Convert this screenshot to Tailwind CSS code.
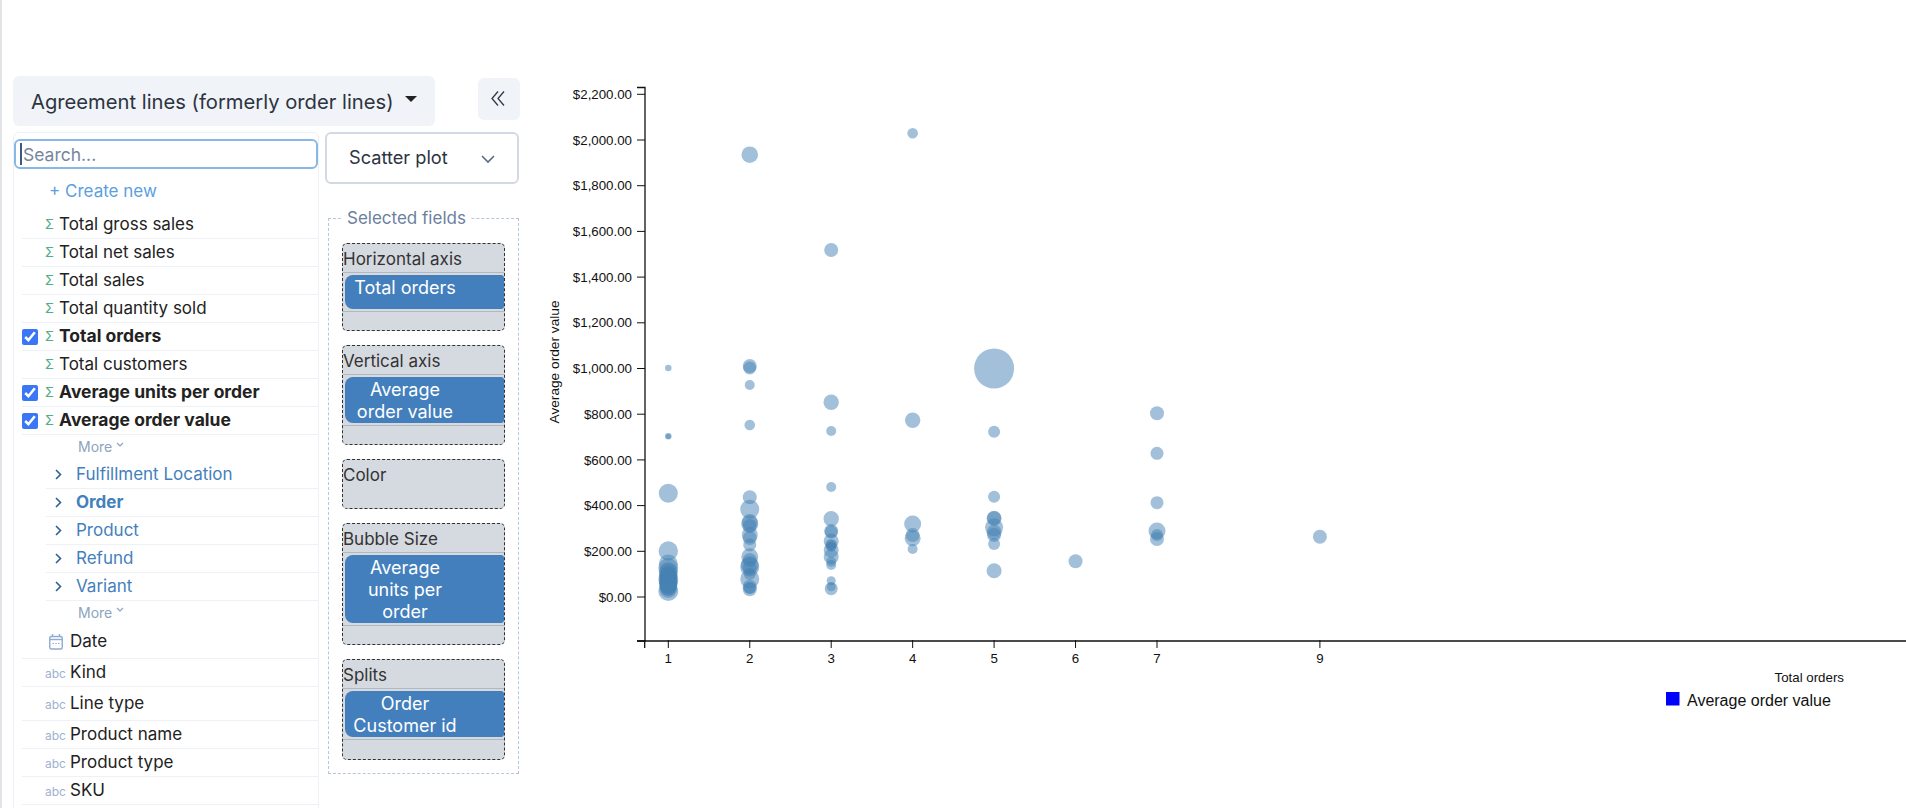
<!DOCTYPE html>
<html>
 <head>
  <title>Scatter plot</title>
  <script src="https://cdn.jsdelivr.net/npm/@tailwindcss/browser@4"></script>
 </head>
 <body class="bg-white font-['Inter',sans-serif] text-[#222]">
  <div class="flex h-[808px] overflow-hidden border-l-2 border-[#e2e4e8]">
   <!-- sidebar -->
   <div class="w-[521px] shrink-0 pl-[11px] pt-[76px]">
    <div class="flex items-start">
     <button class="flex h-[50px] w-[422px] items-center rounded-md bg-[#f0f3f8] pl-[18px] pt-[2px] text-[20.2px] text-[#2d3340]">
      Agreement lines (formerly order lines)
      <span class="ml-[11px] mb-[6px] h-0 w-0 border-x-[6px] border-t-[6px] border-x-transparent border-t-[#222]"></span>
     </button>
     <button class="ml-[43px] mt-[2px] flex h-[42px] w-[42px] items-center justify-center rounded-md bg-[#f0f3f8]">
      <svg class="mb-[1px] mr-[3px]" width="14" height="15" viewBox="0 0 14 15" fill="none" stroke="#2f3848" stroke-width="1.3"><path d="M7 .5 1 7.5 7 14.5M13 .5 7 7.5 13 14.5"/></svg>
     </button>
    </div>
    <div class="mt-[6px] flex items-start">
     <!-- field list -->
     <div class="relative h-[700px] w-[306px] shrink-0 rounded-t-md border border-[#eef1f6] pt-[6px]">
      <input class="block h-[30px] w-[304px] rounded-md border-2 border-[#8ab8e6] pl-[7px] text-[17.5px] placeholder:text-[#76869e]" placeholder="Search..." type="text"/>
      <span class="absolute left-[6px] top-[10px] h-[22px] w-[2px] bg-[#3d5a80]"></span>
      <div class="flex h-[42px] items-center pl-[35px] pt-[3px] text-[17px] text-[#5a9fe0]">+ Create new</div>
      <div class="ml-[8px] text-[17px]">
       <div class="flex h-[28px] items-center border-b border-[#eef1f6] pl-[23px]"><span class="w-[14px] text-[13px] leading-none text-[#4fae85]">Σ</span>Total gross sales</div>
       <div class="flex h-[28px] items-center border-b border-[#eef1f6] pl-[23px]"><span class="w-[14px] text-[13px] leading-none text-[#4fae85]">Σ</span>Total net sales</div>
       <div class="flex h-[28px] items-center border-b border-[#eef1f6] pl-[23px]"><span class="w-[14px] text-[13px] leading-none text-[#4fae85]">Σ</span>Total sales</div>
       <div class="flex h-[28px] items-center border-b border-[#eef1f6] pl-[23px]"><span class="w-[14px] text-[13px] leading-none text-[#4fae85]">Σ</span>Total quantity sold</div>
       <div class="flex h-[28px] items-center border-b border-[#eef1f6] text-[17.5px] font-bold"><input checked class="mr-[7px] h-[16px] w-[16px] accent-[#3b76f6]" type="checkbox"/><span class="w-[14px] text-[13px] font-normal leading-none text-[#4fae85]">Σ</span>Total orders</div>
       <div class="flex h-[28px] items-center border-b border-[#eef1f6] pl-[23px]"><span class="w-[14px] text-[13px] leading-none text-[#4fae85]">Σ</span>Total customers</div>
       <div class="flex h-[28px] items-center border-b border-[#eef1f6] text-[17.5px] font-bold"><input checked class="mr-[7px] h-[16px] w-[16px] accent-[#3b76f6]" type="checkbox"/><span class="w-[14px] text-[13px] font-normal leading-none text-[#4fae85]">Σ</span>Average units per order</div>
       <div class="flex h-[28px] items-center border-b border-[#eef1f6] text-[17.5px] font-bold"><input checked class="mr-[7px] h-[16px] w-[16px] accent-[#3b76f6]" type="checkbox"/><span class="w-[14px] text-[13px] font-normal leading-none text-[#4fae85]">Σ</span>Average order value</div>
       <div class="flex h-[25px] items-center pb-[2px] pl-[56px] text-[14px] text-[#8fa3bd]">More<svg class="mb-[5px] ml-[4px]" width="8" height="5" viewBox="0 0 8 5" fill="none" stroke="#8fa3bd" stroke-width="1.2"><path d="M1 1l3 3 3-3"/></svg></div>
       <div class="ml-[24px] pt-[1px] text-[#4380bc]">
        <div class="flex h-[28px] items-center border-b border-[#eef1f6] pl-[9px]"><svg class="mr-[14px]" width="7" height="11" viewBox="0 0 7 11" fill="none" stroke="#2f5f94" stroke-width="1.6"><path d="M1 1l4.5 4.5L1 10"/></svg>Fulfillment Location</div>
        <div class="flex h-[28px] items-center border-b border-[#eef1f6] pl-[9px] font-bold"><svg class="mr-[14px]" width="7" height="11" viewBox="0 0 7 11" fill="none" stroke="#2f5f94" stroke-width="1.6"><path d="M1 1l4.5 4.5L1 10"/></svg>Order</div>
        <div class="flex h-[28px] items-center border-b border-[#eef1f6] pl-[9px]"><svg class="mr-[14px]" width="7" height="11" viewBox="0 0 7 11" fill="none" stroke="#2f5f94" stroke-width="1.6"><path d="M1 1l4.5 4.5L1 10"/></svg>Product</div>
        <div class="flex h-[28px] items-center border-b border-[#eef1f6] pl-[9px]"><svg class="mr-[14px]" width="7" height="11" viewBox="0 0 7 11" fill="none" stroke="#2f5f94" stroke-width="1.6"><path d="M1 1l4.5 4.5L1 10"/></svg>Refund</div>
        <div class="flex h-[28px] items-center border-b border-[#eef1f6] pl-[9px]"><svg class="mr-[14px]" width="7" height="11" viewBox="0 0 7 11" fill="none" stroke="#2f5f94" stroke-width="1.6"><path d="M1 1l4.5 4.5L1 10"/></svg>Variant</div>
       </div>
       <div class="flex h-[24px] items-center pb-[2px] pl-[56px] text-[14px] text-[#8fa3bd]">More<svg class="mb-[5px] ml-[4px]" width="8" height="5" viewBox="0 0 8 5" fill="none" stroke="#8fa3bd" stroke-width="1.2"><path d="M1 1l3 3 3-3"/></svg></div>
       <div class="flex h-[34px] items-center border-b border-[#eef1f6] pl-[27px] pt-[1px]"><svg class="mr-[7px]" width="14" height="16" viewBox="0 0 14 16" fill="none" stroke="#8fabd0"><rect x=".75" y="2.5" width="12.5" height="12.5" rx="1.5" stroke-width="1.4"/><path d="M1 5.5h12" stroke-width="1.4"/><path d="M3.5 0v2.5M10.5 0v2.5" stroke-width="1.4"/><path d="M3.5 9.5h1.5M6.3 9.5h1.5M9 9.5h1.5" stroke-width="1"/></svg>Date</div>
       <div class="flex h-[28px] items-center border-b border-[#eef1f6] pl-[23px]"><span class="w-[25px] pt-[2px] text-[12px] text-[#9db2d0]">abc</span>Kind</div>
       <div class="flex h-[34px] items-center border-b border-[#eef1f6] pl-[23px]"><span class="w-[25px] pt-[2px] text-[12px] text-[#9db2d0]">abc</span>Line type</div>
       <div class="flex h-[28px] items-center border-b border-[#eef1f6] pl-[23px]"><span class="w-[25px] pt-[2px] text-[12px] text-[#9db2d0]">abc</span>Product name</div>
       <div class="flex h-[28px] items-center border-b border-[#eef1f6] pl-[23px]"><span class="w-[25px] pt-[2px] text-[12px] text-[#9db2d0]">abc</span>Product type</div>
       <div class="flex h-[28px] items-center border-b border-[#eef1f6] pl-[23px]"><span class="w-[25px] pt-[2px] text-[12px] text-[#9db2d0]">abc</span>SKU</div>
      </div>
     </div>
     <!-- chart options -->
     <div class="ml-[6px] w-[194px] shrink-0">
      <div class="flex h-[52px] items-center justify-between rounded-md border-2 border-[#d3d9e3] pl-[22px] pr-[22px] text-[18.2px] text-[#2d3340]">
       Scatter plot
       <svg class="mt-[3px]" width="14" height="9" viewBox="0 0 14 9" fill="none" stroke="#5a6b85" stroke-width="1.6"><path d="M1 1l6 6 6-6"/></svg>
      </div>
      <fieldset class="ml-[3px] mt-[24px] h-[566px] w-[191px] border border-dashed border-[#b5c7dc] px-[13px] pt-[15px]">
       <legend class="ml-0 px-[5px] text-[17px] leading-[20px] text-[#6b80a0]">Selected fields</legend>
       <div class="flex flex-col gap-[14px] text-[17px] text-[#333]">
        <div class="h-[88px] overflow-hidden rounded-[5px] border border-dashed border-[#333] bg-[#d5d9e0]">
         <div class="h-[28px] pt-[4px] leading-[22px]">Horizontal axis</div>
         <div class="border-y border-[#b4b7bc] pl-[2px] py-[2px]"><div class="min-h-[34px] rounded-l-lg rounded-r-[3px] bg-[#437fbd] text-[18px] text-white"><div class="ml-[7px] w-[106px] pt-[2px] text-center leading-[22px]">Total orders</div></div></div>
        </div>
        <div class="h-[100px] overflow-hidden rounded-[5px] border border-dashed border-[#333] bg-[#d5d9e0]">
         <div class="h-[28px] pt-[4px] leading-[22px]">Vertical axis</div>
         <div class="border-y border-[#b4b7bc] pl-[2px] py-[2px]"><div class="min-h-[34px] rounded-l-lg rounded-r-[3px] bg-[#437fbd] text-[18px] text-white"><div class="ml-[7px] w-[106px] pt-[2px] text-center leading-[22px]">Average order value</div></div></div>
        </div>
        <div class="h-[50px] overflow-hidden rounded-[5px] border border-dashed border-[#333] bg-[#d5d9e0]">
         <div class="h-[28px] pt-[4px] leading-[22px]">Color</div>
        </div>
        <div class="h-[122px] overflow-hidden rounded-[5px] border border-dashed border-[#333] bg-[#d5d9e0]">
         <div class="h-[28px] pt-[4px] leading-[22px]">Bubble Size</div>
         <div class="border-y border-[#b4b7bc] pl-[2px] py-[2px]"><div class="min-h-[34px] rounded-l-lg rounded-r-[3px] bg-[#437fbd] text-[18px] text-white"><div class="ml-[7px] w-[106px] pt-[2px] text-center leading-[22px]">Average units per order</div></div></div>
        </div>
        <div class="h-[101px] overflow-hidden rounded-[5px] border border-dashed border-[#333] bg-[#d5d9e0]">
         <div class="h-[28px] pt-[4px] leading-[22px]">Splits</div>
         <div class="border-y border-[#b4b7bc] pl-[2px] py-[2px]"><div class="min-h-[34px] rounded-l-lg rounded-r-[3px] bg-[#437fbd] text-[18px] text-white"><div class="ml-[7px] w-[106px] pt-[2px] text-center leading-[22px]">Order Customer id</div></div></div>
        </div>
       </div>
      </fieldset>
     </div>
    </div>
   </div>
   <!-- chart, viewBox keeps page coordinates -->
   <svg id="chart" class="block shrink-0 font-['Liberation_Sans',sans-serif]" width="1383" height="808" viewBox="523 0 1383 808"></svg>
  </div>
  <script>
   const NS = 'http://www.w3.org/2000/svg';
   const chart = document.getElementById('chart');
   function add(tag, attrs, text) {
     const el = document.createElementNS(NS, tag);
     for (const k in attrs) el.setAttribute(k, attrs[k]);
     if (text) el.textContent = text;
     chart.appendChild(el);
   }
   const xOf = n => 668.3 + (n - 1) * 81.45;

   // [orders, page y, radius]
   const points = [
     [2,154.7,8.3],[4,133.3,5.3],[3,250,7],[5,368.5,20],[1,368,3.3],[2,366,7],[2,368,6.5],
     [1,436.3,3.3],[1,436.3,2.6],[1,493.3,9.5],[1,551,9.7],
     [1,564,9.5],[1,568,10],[1,571,9],[1,573,9.5],[1,575,8],[1,576,9],[1,577,8.5],[1,578,9],[1,579,10],[1,580,8],[1,581,9],[1,582,9.5],[1,583,9],[1,584,8],[1,585,9],[1,586,8],[1,587,8.5],[1,588,8],[1,589,9],[1,591,10],[1,574,8],[1,577,7],[1,580,7],[1,583,8],
     [2,385,5],[2,425,5.3],[2,497.3,7],[2,509.3,9.5],[2,522,8],[2,524,8.5],[2,526,7],[2,535,8],[2,538,7],[2,545,6.5],[2,556.7,8.5],[2,560,7],[2,565,9],[2,567,9.5],[2,568,7],[2,574,6],[2,579,9.5],[2,586.7,7],[2,589.3,7],[2,588,6],
     [3,402.3,7.7],[3,431,5],[3,487,5],[3,518.7,7.7],[3,531,7],[3,532,6.5],[3,541,7.5],[3,545,5],[3,546.7,5],[3,545,6],[3,550,7.5],[3,556.7,7.5],[3,561.7,5],[3,565,5],[3,580.7,4.5],[3,586.7,4.5],[3,588.7,6.5],
     [4,420.3,7.7],[4,524,8.5],[4,535,7],[4,538.3,8],[4,549,5],
     [5,431.7,6],[5,496.7,6],[5,518.3,7.5],[5,518.3,7],[5,527.3,9],[5,532.3,7.5],[5,535,7],[5,544,6],[5,570.7,7.5],
     [6,561.3,7],[7,413.3,7],[7,453.3,6.5],[7,502.7,6.5],[7,531,8.5],[7,535,6],[7,539,7],[9,536.7,7]
   ];
   points.forEach(p => add('circle', { cx: xOf(p[0]), cy: p[1], r: p[2], fill: '#4682b4', 'fill-opacity': 0.5 }));

   // y axis
   add('path', { d: 'M637 87.5H645V641H637', fill: 'none', stroke: '#111', 'stroke-width': 1.3 });
   ['$0.00','$200.00','$400.00','$600.00','$800.00','$1,000.00','$1,200.00','$1,400.00','$1,600.00','$1,800.00','$2,000.00','$2,200.00'].forEach((label, i) => {
     const y = 597 - i * 45.7;
     add('line', { x1: 637, x2: 645, y1: y, y2: y, stroke: '#111', 'stroke-width': 1 });
     add('text', { x: 632, y: y + 4.6, 'text-anchor': 'end', 'font-size': 13.3, fill: '#111' }, label);
   });
   add('text', { transform: 'translate(559 362) rotate(-90)', 'text-anchor': 'middle', 'font-size': 13.7, fill: '#111' }, 'Average order value');

   // x axis
   add('path', { d: 'M637 641H1906M644.7 640V648', fill: 'none', stroke: '#111', 'stroke-width': 1.3 });
   [1,2,3,4,5,6,7,9].forEach(n => {
     add('line', { x1: xOf(n), x2: xOf(n), y1: 640, y2: 648, stroke: '#111', 'stroke-width': 1 });
     add('text', { x: xOf(n), y: 662.5, 'text-anchor': 'middle', 'font-size': 13.3, fill: '#111' }, String(n));
   });
   add('text', { x: 1844, y: 681.5, 'text-anchor': 'end', 'font-size': 13.3, fill: '#111' }, 'Total orders');

   // legend
   add('rect', { x: 1666, y: 692, width: 13.5, height: 13.5, fill: '#0000ff' });
   add('text', { x: 1687, y: 705.5, 'font-size': 16, fill: '#111' }, 'Average order value');
  </script>
 </body>
</html>
